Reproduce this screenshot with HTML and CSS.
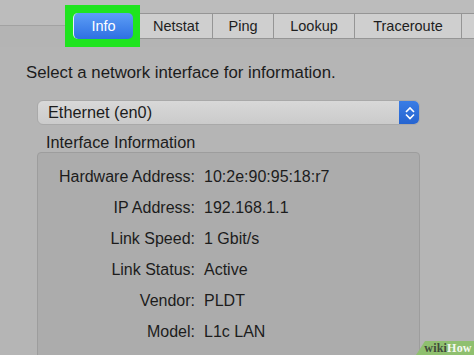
FILE: index.html
```html
<!DOCTYPE html>
<html lang="en">
<head>
<meta charset="utf-8">
<title>Network Utility</title>
<link rel="stylesheet" href="styles.css">
</head>
<body>
<div class="page">
  <div class="top">
    <div class="hl"><div class="tab-active">Info</div></div>
    <div class="tabs">
      <div class="tab t-netstat">Netstat</div>
      <div class="tab t-ping">Ping</div>
      <div class="tab t-lookup">Lookup</div>
      <div class="tab t-trace">Traceroute</div>
      <div class="tab t-more"></div>
    </div>
  </div>
  <p class="prompt">Select a network interface for information.</p>
  <div class="popup">
    <span class="popup-label">Ethernet (en0)</span>
    <span class="stepper">
      <svg width="14" height="16" viewBox="0 0 14 16"><polyline points="3,7 7,3 11,7" fill="none" stroke="#fff" stroke-width="1.6"/><polyline points="3,9.5 7,13.5 11,9.5" fill="none" stroke="#fff" stroke-width="1.6"/></svg>
    </span>
  </div>
  <div class="section-title">Interface Information</div>
  <div class="panel">
    <div class="grid">
      <div class="lbl">Hardware Address:</div><div class="val">10:2e:90:95:18:r7</div>
      <div class="lbl">IP Address:</div><div class="val">192.168.1.1</div>
      <div class="lbl">Link Speed:</div><div class="val">1 Gbit/s</div>
      <div class="lbl">Link Status:</div><div class="val">Active</div>
      <div class="lbl">Vendor:</div><div class="val">PLDT</div>
      <div class="lbl">Model:</div><div class="val">L1c LAN</div>
    </div>
  </div>
  <div class="wikihow"><span class="wk">wiki</span><span class="hw">How</span></div>
</div>
</body>
</html>
```

FILE: styles.css
```css
html, body {
  margin: 0;
  padding: 0;
}
body {
  width: 474px;
  height: 355px;
  overflow: hidden;
  background: #b5b5b5;
  font-family: "Liberation Sans", Arial, sans-serif;
  color: #1c1c1c;
}
.page {
  position: relative;
  width: 474px;
  height: 355px;
  overflow: hidden;
}
.top {
  height: 47px;
  box-sizing: border-box;
  padding: 5px 0 0 65px;
  display: flex;
  align-items: flex-start;
  background: linear-gradient(#bcbcbc 0, #bcbcbc 25px, #a2a2a2 25px, #a2a2a2 26px, #b4b4b4 26px);
}
.hl {
  background: #1fe41f;
  padding: 8px 7px 8px 8px;
  flex: none;
}
.tab-active {
  width: 60px;
  height: 26px;
  box-sizing: border-box;
  border-radius: 5px;
  background: linear-gradient(#5d9ef6, #2e70e2);
  border-left: 1px solid #e8eefa;
  color: #fff;
  font-size: 14.5px;
  line-height: 26px;
  text-align: center;
}
.tabs {
  display: flex;
  margin-top: 8px;
  flex: none;
}
.tab {
  height: 26px;
  box-sizing: border-box;
  border: 1px solid #959595;
  border-left: none;
  background: #cfcfcf;
  font-size: 14.5px;
  line-height: 24px;
  text-align: center;
  color: #1e1e1e;
}
.t-netstat { width: 73px; }
.t-ping { width: 61px; }
.t-lookup { width: 81px; }
.t-trace { width: 107px; }
.t-more { width: 30px; }
.prompt {
  margin: 16px 0 0 26px;
  font-size: 16.8px;
  line-height: 20px;
}
.popup {
  margin: 17px 0 0 37px;
  width: 383px;
  height: 25px;
  box-sizing: border-box;
  border: 1px solid #a9a9a9;
  border-radius: 6px;
  background: linear-gradient(#d8d8d8, #cbcbcb);
  display: flex;
  align-items: stretch;
  overflow: hidden;
}
.popup-label {
  flex: 1;
  padding-left: 10px;
  font-size: 16.3px;
  line-height: 23px;
}
.stepper {
  width: 21px;
  margin: -1px -1px -1px 0;
  background: linear-gradient(#3a7ee6, #2563cf);
  border-radius: 0 6px 6px 0;
  display: flex;
  align-items: center;
  justify-content: center;
}
.stepper svg {
  display: block;
}
.section-title {
  margin: 8px 0 0 46px;
  font-size: 16.3px;
  line-height: 19px;
}
.panel {
  margin: 0 0 0 37px;
  width: 383px;
  height: 230px;
  box-sizing: border-box;
  border: 1px solid #9d9d9d;
  border-radius: 4px;
  background: #acacac;
  padding-top: 8px;
}
.grid {
  display: grid;
  grid-template-columns: 157px 1fr;
  column-gap: 9px;
  font-size: 16px;
  line-height: 31px;
}
.lbl {
  text-align: right;
  white-space: nowrap;
}
.val {
  white-space: nowrap;
}
.wikihow {
  position: absolute;
  right: 0;
  bottom: 0;
  width: 58px;
  height: 14px;
  padding-left: 6px;
  box-sizing: border-box;
  background: #8fc06f;
  clip-path: polygon(9px 0, 100% 0, 100% 100%, 0 100%);
  font-family: "Liberation Serif", "DejaVu Serif", serif;
  font-weight: bold;
  font-size: 12px;
  letter-spacing: 0.2px;
  line-height: 15px;
  text-align: center;
}
.wk { color: #3f4a3a; }
.hw { color: #f4f8f0; }
```
